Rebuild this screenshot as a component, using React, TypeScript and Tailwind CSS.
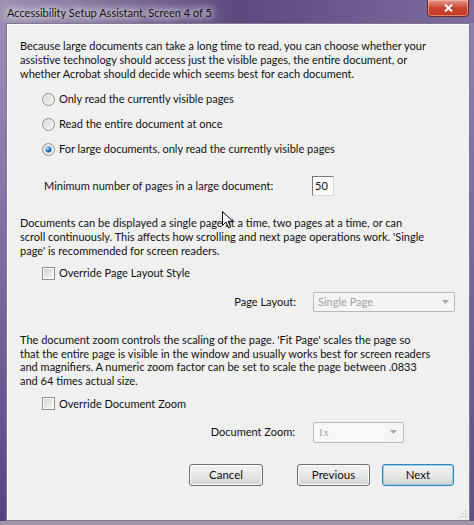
import React from "react";

function Radio({ checked = false }: { checked?: boolean }) {
  return (
    <svg width="13" height="13" viewBox="0 0 13 13" className="shrink-0">
      <defs>
        <linearGradient id="radioFill" x1="0" y1="0" x2="1" y2="1">
          <stop offset="0" stopColor="#cfcfcf" />
          <stop offset="1" stopColor="#fbfbfb" />
        </linearGradient>
        <radialGradient id="radioDot" cx="0.35" cy="0.3" r="0.8">
          <stop offset="0" stopColor="#b9e6ff" />
          <stop offset="0.45" stopColor="#3a8bd0" />
          <stop offset="1" stopColor="#123f73" />
        </radialGradient>
      </defs>
      <circle cx="6.5" cy="6.5" r="6" fill="url(#radioFill)" stroke="#8f9090" strokeWidth="1" />
      <circle cx="6.5" cy="6.5" r="4.6" fill="none" stroke="#f4f4f4" strokeWidth="0.8" />
      {checked && <circle cx="6.5" cy="6.5" r="3" fill="url(#radioDot)" />}
    </svg>
  );
}

function Checkbox() {
  return (
    <div className="w-[13px] h-[13px] shrink-0 border border-[#8f8f8f] bg-white p-px">
      <div className="w-full h-full bg-gradient-to-br from-[#d2d2d2] to-[#f8f8f8]" />
    </div>
  );
}

function Arrow() {
  return (
    <svg width="7" height="4" viewBox="0 0 7 4">
      <path d="M0 0 L7 0 L3.5 4 Z" fill="#a8a8a8" />
    </svg>
  );
}

function Button({ label, primary = false }: { label: string; primary?: boolean }) {
  return (
    <div
      className={`h-[22px] flex items-center justify-center rounded-[3px] border bg-gradient-to-b from-[#f3f3f3] via-[#e8e8e8] to-[#d3d3d3] text-[11.5px] ${
        primary
          ? "border-[#3c7fb1] shadow-[inset_0_0_0_1px_#8fd3f3]"
          : "border-[#707070] shadow-[inset_0_0_0_1px_#fcfcfc]"
      }`}
    >
      {label}
    </div>
  );
}

export default function App() {
  return (
    <div className="relative w-[474px] h-[525px] overflow-hidden flex flex-col font-['Lato',sans-serif] text-[11px] text-[#101010]">
      {/* Title bar */}
      <div className="h-[23px] shrink-0 flex justify-between bg-gradient-to-r from-[#9c93b2] via-[#5c4a7e] to-[#7e6ea0]">
        <div className="pl-[7px] pt-[5px] text-[11px] text-[#141414] [text-shadow:0_0_6px_#ffffff,0_0_10px_#ffffff,0_0_14px_#e6e0ee]">
          Accessibility Setup Assistant, Screen 4 of 5
        </div>
        <div className="mr-[5px] w-[42px] h-[17px] flex items-center justify-center rounded-b-[4px] border border-t-0 border-[#6e2a24] bg-gradient-to-b from-[#e49a8c] via-[#c9432f] to-[#c23a22] shadow-[inset_0_0_0_1px_rgba(255,200,190,0.5)]">
          <svg width="9" height="8" viewBox="0 0 9 8">
            <path d="M1 0.5 L8 7.5 M8 0.5 L1 7.5" stroke="#ffffff" strokeWidth="2" />
          </svg>
        </div>
      </div>

      <div className="flex flex-1 min-h-0">
        <div className="w-[6px] bg-gradient-to-b from-[#9a8db6] via-[#7b69a3] to-[#574381]" />

        {/* Content panel */}
        <div className="relative flex-1 flex flex-col bg-[#f0f0f0] border border-[#7f7a92] shadow-[inset_1px_1px_0_#ffffff]">
          <p className="pt-[15px] pl-[13px] leading-[14px] whitespace-nowrap">
            Because large documents can take a long time to read, you can choose whether your
            <br />
            assistive technology should access just the visible pages, the entire document, or
            <br />
            whether Acrobat should decide which seems best for each document.
          </p>

          <div className="mt-[10px] pl-[35px] flex flex-col gap-[9px]">
            {[
              ["Only read the currently visible pages", false],
              ["Read the entire document at once", false],
              ["For large documents, only read the currently visible pages", true],
            ].map(([label, checked]) => (
              <div key={label as string} className="h-[16px] flex items-center gap-[4px]">
                <Radio checked={checked as boolean} />
                <span>{label as string}</span>
              </div>
            ))}
          </div>

          <div className="mt-[19px] pl-[37px] h-[20px] flex items-center">
            <span className="w-[268px]">Minimum number of pages in a large document:</span>
            <div className="w-[22px] h-[20px] border border-[#7a7a7a] border-r-[#d6d6d6] border-b-[#d6d6d6] bg-white pl-[2px] leading-[18px]">
              50
            </div>
          </div>

          <p className="mt-[20px] pl-[13px] leading-[14px] whitespace-nowrap">
            Documents can be displayed a single page at a time, two pages at a time, or can
            <br />
            scroll continuously. This affects how scrolling and next page operations work. 'Single
            <br />
            page' is recommended for screen readers.
          </p>

          <div className="mt-[7px] pl-[35px] h-[16px] flex items-center gap-[4px]">
            <Checkbox />
            <span>Override Page Layout Style</span>
          </div>

          <div className="mt-[11px] h-[20px] flex items-center">
            <span className="w-[289px] text-right">Page Layout:</span>
            <div className="ml-[17px] w-[142px] h-[20px] flex items-center justify-between rounded-[2px] border border-[#b9b9b9] bg-[#f4f4f4] pl-[4px] pr-[5px] text-[#a3a3a3]">
              <span>Single Page</span>
              <Arrow />
            </div>
          </div>

          <p className="mt-[21px] pl-[13px] leading-[13.7px] whitespace-nowrap">
            The document zoom controls the scaling of the page. 'Fit Page' scales the page so
            <br />
            that the entire page is visible in the window and usually works best for screen readers
            <br />
            and magnifiers. A numeric zoom factor can be set to scale the page between .0833
            <br />
            and 64 times actual size.
          </p>

          <div className="mt-[8px] pl-[35px] h-[16px] flex items-center gap-[4px]">
            <Checkbox />
            <span>Override Document Zoom</span>
          </div>

          <div className="mt-[10px] h-[21px] flex items-center">
            <span className="w-[288px] text-right">Document Zoom:</span>
            <div className="ml-[18px] w-[91px] h-[21px] flex items-stretch rounded-[2px] border border-[#b9b9b9] bg-[#f4f4f4] p-px">
              <div className="flex-1 flex items-center bg-[#f8f8f8] pl-[3px] font-['Liberation_Serif',serif] text-[#a3a3a3]">
                1x
              </div>
              <div className="w-[17px] flex items-center justify-center">
                <Arrow />
              </div>
            </div>
          </div>

          <div className="mt-[21px] pr-[15px] flex justify-end">
            <div className="w-[74px]">
              <Button label="Cancel" />
            </div>
            <div className="ml-[34px] w-[73px]">
              <Button label="Previous" />
            </div>
            <div className="ml-[12px] w-[72px]">
              <Button label="Next" primary />
            </div>
          </div>

          {/* resize grip */}
          <svg className="absolute right-[2px] bottom-[2px]" width="8" height="8" viewBox="0 0 8 8">
            <rect x="6" y="0" width="1.5" height="1.5" fill="#c2c2c2" />
            <rect x="3" y="3" width="1.5" height="1.5" fill="#c2c2c2" />
            <rect x="6" y="3" width="1.5" height="1.5" fill="#c2c2c2" />
            <rect x="0" y="6" width="1.5" height="1.5" fill="#c2c2c2" />
            <rect x="3" y="6" width="1.5" height="1.5" fill="#c2c2c2" />
            <rect x="6" y="6" width="1.5" height="1.5" fill="#c2c2c2" />
          </svg>
        </div>

        <div className="w-[4px] bg-gradient-to-b from-[#8f80b2] via-[#76649e] to-[#624e8a]" />
      </div>
      <div className="h-[4px] shrink-0 bg-[#9c96a8]" />

      {/* mouse pointer */}
      <svg className="absolute left-[222px] top-[211px]" width="12" height="18" viewBox="0 0 12 18">
        <path d="M0.5 0.5 L0.5 14.5 L4 11 L6.5 16.8 L8.6 15.9 L6.2 10.3 L10.8 10.3 Z" fill="#ffffff" stroke="#000000" strokeWidth="1" strokeLinejoin="round" />
      </svg>
    </div>
  );
}
